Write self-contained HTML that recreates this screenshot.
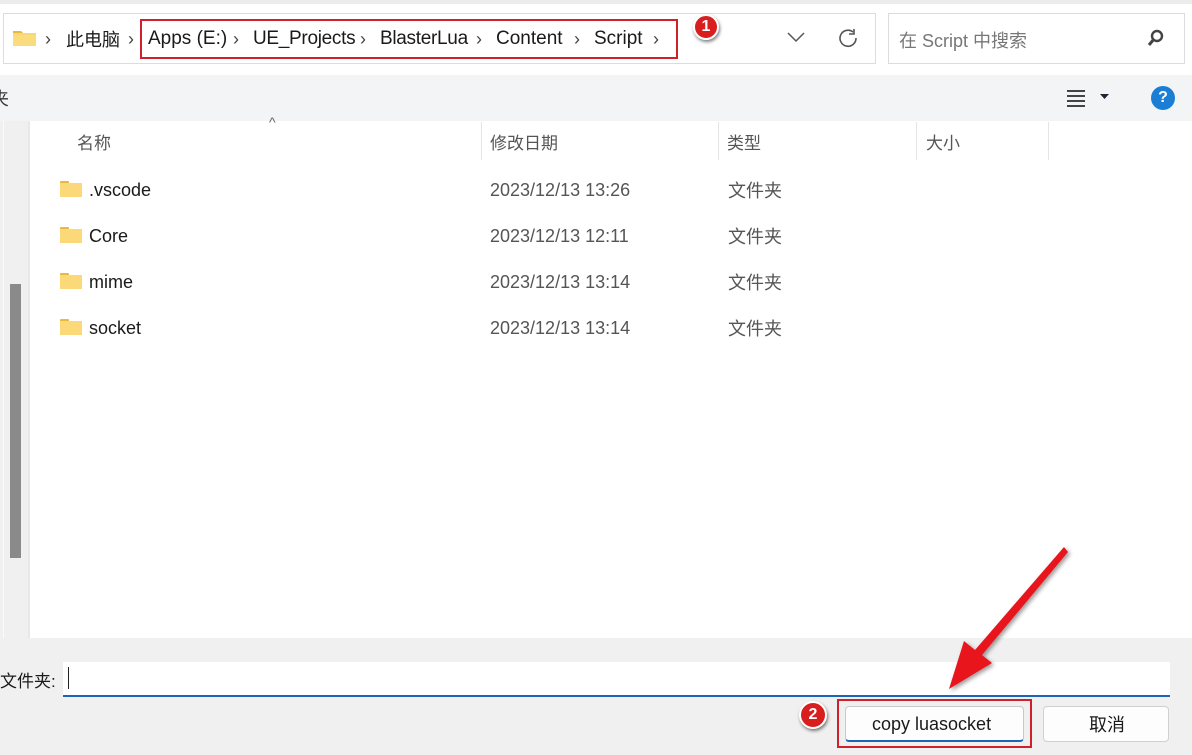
<!DOCTYPE html>
<html><head><meta charset="utf-8"><style>
*{margin:0;padding:0;box-sizing:border-box}
body{width:1192px;height:755px;position:relative;overflow:hidden;background:#fff;font-family:"Liberation Sans","Noto Sans CJK SC",sans-serif;color:#1a1a1a}
.abs{position:absolute}
.t{position:absolute;white-space:nowrap}
.folder{position:absolute;width:22px;height:16px}
.sep{position:absolute;top:122px;height:38px;width:1px;background:#e5e5e5}
</style></head><body>
<div class="abs" style="left:0;top:0;width:1192px;height:4px;background:#ececec"></div>
<div class="abs" style="left:3px;top:13px;width:873px;height:51px;border:1px solid #dcdcdc;background:#fff"></div>
<svg class="abs" style="left:12px;top:28px" width="26" height="20"><path d="M1 3h8l2 2h13v13H1z" fill="#f8d775"/><path d="M1 3h8l2 2H1z" fill="#e9b83f"/><rect x="1" y="7" width="23" height="11" fill="#fbdc7d"/></svg>
<div class="t" style="left:45px;top:29px;font-size:18px;color:#444">›</div>
<div class="t" style="left:66px;top:26px;font-size:18px">此电脑</div>
<div class="t" style="left:128px;top:29px;font-size:18px;color:#444">›</div>
<div class="abs" style="left:140px;top:19px;width:538px;height:40px;border:2px solid #d0202a"></div>
<div class="t" style="left:148px;top:28px;font-size:19px">Apps (E:)</div>
<div class="t" style="left:233px;top:29px;font-size:18px;color:#444">›</div>
<div class="t" style="left:253px;top:28px;font-size:19px;letter-spacing:-0.3px">UE_Projects</div>
<div class="t" style="left:360px;top:29px;font-size:18px;color:#444">›</div>
<div class="t" style="left:380px;top:28px;font-size:19px;letter-spacing:-0.3px">BlasterLua</div>
<div class="t" style="left:476px;top:29px;font-size:18px;color:#444">›</div>
<div class="t" style="left:496px;top:28px;font-size:19px">Content</div>
<div class="t" style="left:574px;top:29px;font-size:18px;color:#444">›</div>
<div class="t" style="left:594px;top:28px;font-size:19px">Script</div>
<div class="t" style="left:653px;top:29px;font-size:18px;color:#444">›</div>
<div class="abs" style="left:693px;top:14px;width:26px;height:26px;border-radius:50%;background:#d81e1e;border:2px solid #fff;box-shadow:1px 2px 3px rgba(0,0,0,.5);color:#fff;font-weight:bold;font-size:16px;text-align:center;line-height:22px">1</div>
<svg class="abs" style="left:786px;top:30px" width="20" height="14"><path d="M2 3l8 8 8-8" fill="none" stroke="#555" stroke-width="1.5"/></svg>
<svg class="abs" style="left:837px;top:27px" width="24" height="24"><path d="M19 11a8 8 0 1 1-3-6" fill="none" stroke="#555" stroke-width="1.6"/><path d="M17 2v5h-5" fill="none" stroke="#555" stroke-width="1.6"/></svg>
<div class="abs" style="left:888px;top:13px;width:297px;height:51px;border:1px solid #dcdcdc"></div>
<div class="t" style="left:899px;top:27px;font-size:18px;color:#777">在 Script 中搜索</div>
<svg class="abs" style="left:1146px;top:29px" width="20" height="20"><circle cx="11" cy="7" r="5" fill="none" stroke="#444" stroke-width="2.4"/><path d="M8 10l-5 6" stroke="#444" stroke-width="3"/></svg>
<div class="abs" style="left:0;top:75px;width:1192px;height:46px;background:#f3f4f6"></div>
<div class="t" style="left:-9px;top:85px;font-size:18px;color:#333">夹</div>
<div class="abs" style="left:1067px;top:90px;width:18px;height:2px;background:#444;box-shadow:0 5px 0 #444,0 10px 0 #444,0 15px 0 #444"></div>
<svg class="abs" style="left:1100px;top:94px" width="10" height="6"><path d="M0 0h9l-4.5 5z" fill="#223"/></svg>
<div class="abs" style="left:1151px;top:86px;width:24px;height:24px;border-radius:50%;background:#1a7fd4;color:#fff;font-size:16px;font-weight:bold;text-align:center;line-height:24px">?</div>
<div class="abs" style="left:0;top:121px;width:30px;height:517px;background:#f0f0f0;border-right:2px solid #e8e8e8"></div>
<div class="abs" style="left:3px;top:121px;width:1px;height:517px;background:#fafafa"></div>
<div class="abs" style="left:10px;top:284px;width:11px;height:274px;background:#8a8a8a"></div>
<div class="t" style="left:269px;top:114px;font-size:14px;color:#666">^</div>
<div class="t" style="left:77px;top:129px;font-size:17px;color:#555">名称</div>
<div class="sep" style="left:481px"></div>
<div class="t" style="left:490px;top:129px;font-size:17px;color:#555">修改日期</div>
<div class="sep" style="left:718px"></div>
<div class="t" style="left:727px;top:129px;font-size:17px;color:#555">类型</div>
<div class="sep" style="left:916px"></div>
<div class="t" style="left:926px;top:129px;font-size:17px;color:#555">大小</div>
<div class="sep" style="left:1048px"></div>
<svg class="folder" style="left:60px;top:181px"><rect x="0" y="0" width="9" height="4" rx="1" fill="#e9b83f"/><rect x="0" y="2" width="22" height="14" fill="#fbd978"/></svg>
<div class="t" style="left:89px;top:180px;font-size:18px">.vscode</div>
<div class="t" style="left:490px;top:180px;font-size:18px;color:#555">2023/12/13 13:26</div>
<div class="t" style="left:728px;top:177px;font-size:18px;color:#555">文件夹</div>
<svg class="folder" style="left:60px;top:227px"><rect x="0" y="0" width="9" height="4" rx="1" fill="#e9b83f"/><rect x="0" y="2" width="22" height="14" fill="#fbd978"/></svg>
<div class="t" style="left:89px;top:226px;font-size:18px">Core</div>
<div class="t" style="left:490px;top:226px;font-size:18px;color:#555">2023/12/13 12:11</div>
<div class="t" style="left:728px;top:223px;font-size:18px;color:#555">文件夹</div>
<svg class="folder" style="left:60px;top:273px"><rect x="0" y="0" width="9" height="4" rx="1" fill="#e9b83f"/><rect x="0" y="2" width="22" height="14" fill="#fbd978"/></svg>
<div class="t" style="left:89px;top:272px;font-size:18px">mime</div>
<div class="t" style="left:490px;top:272px;font-size:18px;color:#555">2023/12/13 13:14</div>
<div class="t" style="left:728px;top:269px;font-size:18px;color:#555">文件夹</div>
<svg class="folder" style="left:60px;top:319px"><rect x="0" y="0" width="9" height="4" rx="1" fill="#e9b83f"/><rect x="0" y="2" width="22" height="14" fill="#fbd978"/></svg>
<div class="t" style="left:89px;top:318px;font-size:18px">socket</div>
<div class="t" style="left:490px;top:318px;font-size:18px;color:#555">2023/12/13 13:14</div>
<div class="t" style="left:728px;top:315px;font-size:18px;color:#555">文件夹</div>
<div class="abs" style="left:0;top:638px;width:1192px;height:117px;background:#f0f0f0"></div>
<div class="t" style="left:0;top:667px;font-size:17px">文件夹:</div>
<div class="abs" style="left:63px;top:662px;width:1107px;height:35px;background:#fff;border-bottom:2px solid #1d64b8"></div>
<div class="abs" style="left:68px;top:667px;width:1px;height:22px;background:#222"></div>
<div class="abs" style="left:837px;top:699px;width:195px;height:49px;border:2px solid #d0202a"></div>
<div class="abs" style="left:845px;top:706px;width:179px;height:36px;background:#fdfdfd;border:1px solid #c8c8c8;border-bottom:2px solid #1d64b8;border-radius:4px"></div>
<div class="t" style="left:872px;top:714px;font-size:18px">copy luasocket</div>
<div class="abs" style="left:1043px;top:706px;width:126px;height:36px;background:#fdfdfd;border:1px solid #d0d0d0;border-radius:4px"></div>
<div class="t" style="left:1089px;top:711px;font-size:18px">取消</div>
<div class="abs" style="left:799px;top:701px;width:28px;height:28px;border-radius:50%;background:#d81e1e;border:2px solid #fff;box-shadow:1px 2px 3px rgba(0,0,0,.5);color:#fff;font-weight:bold;font-size:16px;text-align:center;line-height:24px">2</div>
<svg class="abs" style="left:0;top:0" width="1192" height="755"><defs><filter id="s"><feDropShadow dx="2" dy="2" stdDeviation="2" flood-opacity=".4"/></filter></defs><path d="M1068 552 L982 655 L992 663 L949 689 L964 641 L975 650 L1064 547 Z" fill="#e8141c" filter="url(#s)"/></svg>
</body></html>
